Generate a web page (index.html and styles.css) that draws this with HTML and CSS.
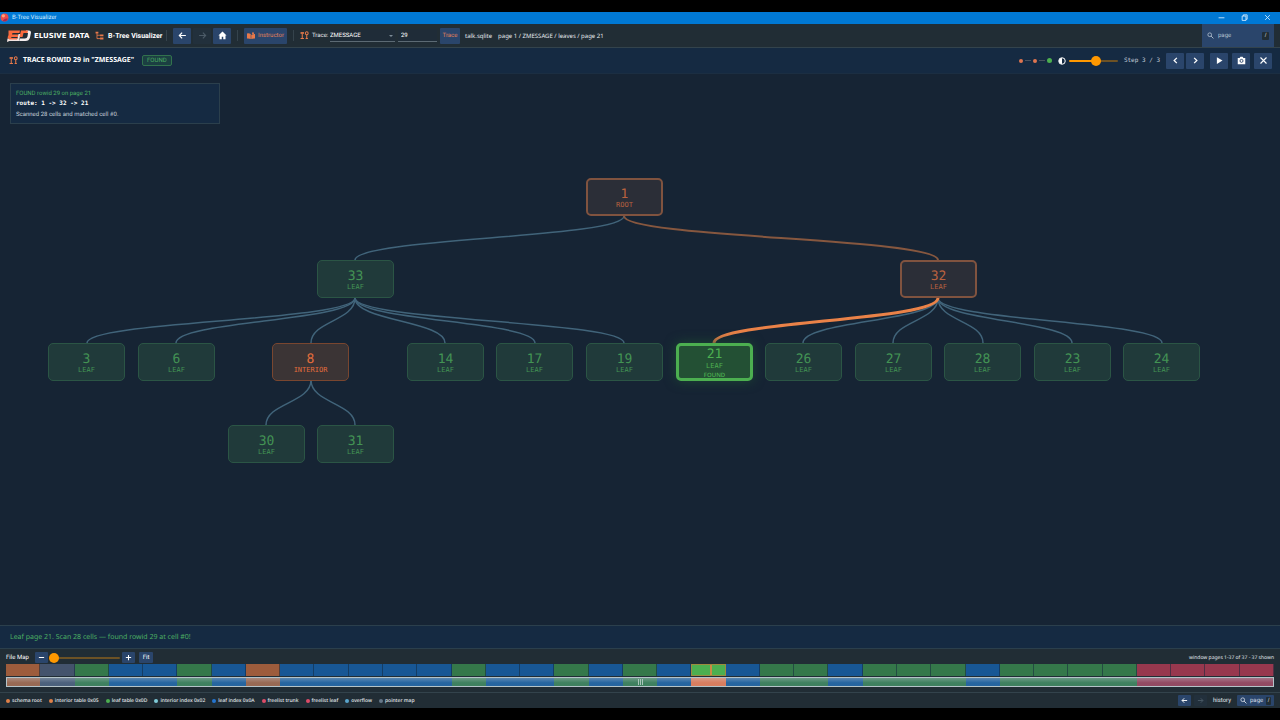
FILE: index.html
```html
<!DOCTYPE html>
<html lang="en">
<head>
<meta charset="utf-8">
<meta name="viewport" content="width=device-width, initial-scale=1">
<title>B-Tree Visualizer</title>
<link rel="stylesheet" href="styles.css">
</head>
<body>
<svg class="defs" aria-hidden="true">
  <symbol id="i-left" viewBox="0 0 12 12"><path d="M10.5 6H2M5.5 2.2 1.8 6l3.7 3.8" fill="none" stroke="currentColor" stroke-width="1.6"/></symbol>
  <symbol id="i-right" viewBox="0 0 12 12"><path d="M1.500 6H10M6.500 2.200 10.200 6 6.500 9.800" fill="none" stroke="currentColor" stroke-width="1.500"/></symbol>
  <symbol id="i-home" viewBox="0 0 12 12"><path d="M6 .8.6 5.900H2V11h3V7.500h2V11h3V5.900h1.400z" fill="currentColor"/></symbol>
  <symbol id="i-prev" viewBox="0 0 12 12"><path d="M7.800 2.500 4.200 6l3.600 3.500" fill="none" stroke="currentColor" stroke-width="1.700"/></symbol>
  <symbol id="i-next" viewBox="0 0 12 12"><path d="M4.200 2.500 7.800 6 4.200 9.500" fill="none" stroke="currentColor" stroke-width="1.700"/></symbol>
  <symbol id="i-close" viewBox="0 0 12 12"><path d="m2 2 8 8M10 2 2 10" fill="none" stroke="currentColor" stroke-width="1.500"/></symbol>
  <symbol id="i-search" viewBox="0 0 12 12"><circle cx="4.700" cy="4.700" r="3.200" fill="none" stroke="currentColor" stroke-width="1.400"/><path d="m7 7 4 4" stroke="currentColor" stroke-width="1.600"/></symbol>
  <symbol id="i-route" viewBox="0 0 16 16"><path d="M4 5v8.500M1 13.500h6M12 7v6.500M10 13.500h4" fill="none" stroke="currentColor" stroke-width="1.800"/><path d="M1 2h6v3H1z" fill="currentColor"/><circle cx="12" cy="4" r="2.500" fill="none" stroke="currentColor" stroke-width="1.800"/></symbol>
  <symbol id="i-tree" viewBox="0 0 16 16"><path d="M1 1.500h5v3H1zM9 6h6v3.500H9zM9 11.500h6V15H9z" fill="currentColor"/><path d="M3.500 4v9.500H9M3.500 7.500H9" fill="none" stroke="currentColor" stroke-width="1.500"/></symbol>
</svg>
<div class="app">
  <div class="titlebar">
    <svg class="app-icon" viewBox="0 0 16 16" aria-hidden="true"><circle cx="8" cy="8" r="7" fill="#e94b4b"/><circle cx="6" cy="5" r="3" fill="#ffa07a"/><path d="M5 14c1-3 5-5 9-4-1 4-6 6-9 4z" fill="#a32855"/></svg>
    <span>B-Tree Visualizer</span>
    <div class="window-controls">
      <button aria-label="Minimize"><svg viewBox="0 0 12 12"><path d="M1 6.500h10" stroke="currentColor" stroke-width="1.500"/></svg></button>
      <button aria-label="Restore"><svg viewBox="0 0 12 12"><path d="M2 3.500h6.500V11H2zM4 3.500v-2h6.500V9H8.500" fill="none" stroke="currentColor" stroke-width="1.500"/></svg></button>
      <button aria-label="Close"><svg viewBox="0 0 12 12"><use href="#i-close"/></svg></button>
    </div>
  </div>

  <header class="toolbar">
    <div class="brand">
      <svg class="logo" viewBox="0 0 48 24" aria-hidden="true">
        <path d="M3 1h23l-1 5H11l-1 3h13l-1 5H9l-1 3H4l-3-2 2-5z" fill="#fa6a3d"/>
        <path d="M1 17h20l2-9h4l-3 14H5l-5 2z" fill="#f3e4e0"/>
        <path d="M2 16h19l-1 3H4z" fill="#f3704a"/>
        <path d="M38 1h6q4 0 4 4l-2 10q-2 7-9 7H24l2-5h10q4 0 5-4l1-7h-5z" fill="#f4eeee"/>
        <path d="M28 1h14l-1 5h-8l-2 8h-6z" fill="#fa6a3d"/>
      </svg>
      <span class="wordmark">ELUSIVE DATA</span>
    </div>
    <div class="product"><svg class="ico orange"><use href="#i-tree"/></svg><strong>B-Tree Visualizer</strong></div>
    <span class="sep"></span>
    <div class="nav">
      <button class="btn" aria-label="Back"><svg class="ico"><use href="#i-left"/></svg></button>
      <button class="btn ghost" aria-label="Forward" disabled><svg class="ico"><use href="#i-right"/></svg></button>
      <button class="btn" aria-label="Home"><svg class="ico"><use href="#i-home"/></svg></button>
    </div>
    <span class="sep"></span>
    <button class="btn instructor"><svg class="ico" viewBox="0 0 16 16"><path d="M0 3q4-1 7.500 1v10Q4 12.500 0 13zM8.500 6Q11 4 16 4v9q-4-.5-7.500 1z" fill="currentColor"/><circle cx="12" cy="2.500" r="2" fill="currentColor"/></svg>Instructor</button>
    <span class="sep"></span>
    <div class="trace-form">
      <svg class="ico orange"><use href="#i-route"/></svg>
      <label for="table">Trace:</label>
      <span class="select"><select id="table"><option>ZMESSAGE</option></select></span>
      <input class="rowid" type="text" value="29" aria-label="Row id">
      <button class="btn trace">Trace</button>
    </div>
    <div class="crumbs"><span>talk.sqlite</span><span>page 1 / ZMESSAGE / leaves / page 21</span></div>
    <button class="search"><svg class="ico"><use href="#i-search"/></svg><span>page</span><kbd>/</kbd></button>
  </header>

  <div class="subbar">
    <svg class="ico orange"><use href="#i-route"/></svg>
    <h1>TRACE ROWID 29 in "ZMESSAGE"</h1>
    <span class="found">FOUND</span>
    <div class="controls">
      <div class="steps"><i class="dot"></i><i class="line"></i><i class="dot"></i><i class="line"></i><i class="dot done"></i></div>
      <svg class="ico contrast" viewBox="0 0 16 16" aria-hidden="true"><circle cx="8" cy="8" r="6.500" fill="none" stroke="#fff" stroke-width="2"/><path d="M8 2a6 6 0 0 0 0 12z" fill="#fff"/></svg>
      <input class="slider dim" type="range" min="0" max="100" value="56" aria-label="Contrast">
      <span class="step">Step 3 / 3</span>
      <div class="pair">
        <button class="btn" aria-label="Previous step"><svg class="ico"><use href="#i-prev"/></svg></button>
        <button class="btn" aria-label="Next step"><svg class="ico"><use href="#i-next"/></svg></button>
      </div>
      <div class="triple">
        <button class="btn" aria-label="Play"><svg class="ico" viewBox="0 0 12 12"><path d="M2.500 1.500 10 6l-7.500 4.500z" fill="currentColor"/></svg></button>
        <button class="btn" aria-label="Snapshot"><svg class="ico" viewBox="0 0 12 12"><path d="M1 2.500h2.500l1-1.500h3l1 1.500H11v8.500H1z" fill="currentColor"/><circle cx="6" cy="6.500" r="2" fill="none" stroke="#2a456b" stroke-width="1.200"/></svg></button>
        <button class="btn" aria-label="Close trace"><svg class="ico"><use href="#i-close"/></svg></button>
      </div>
    </div>
  </div>

  <main class="canvas">
    <aside class="result">
      <p class="ok">FOUND rowid 29 on page 21</p>
      <p class="route">route: 1 -&gt; 32 -&gt; 21</p>
      <p>Scanned 28 cells and matched cell #0.</p>
    </aside>
    <div class="stage">
      <svg class="edges" viewBox="0 0 1152 286" aria-hidden="true">
        <g class="edge">
          <path d="M576 38C576 60 307 60 307 82"/>
          <path d="M307 120C307 143 39 143 39 165"/>
          <path d="M307 120C307 143 128 143 128 165"/>
          <path d="M307 120C307 143 263 143 263 165"/>
          <path d="M307 120C307 143 397 143 397 165"/>
          <path d="M307 120C307 143 487 143 487 165"/>
          <path d="M307 120C307 143 576 143 576 165"/>
          <path d="M263 202C263 225 218 225 218 247"/>
          <path d="M263 202C263 225 307 225 307 247"/>
          <path d="M890 120C890 143 755 143 755 165"/>
          <path d="M890 120C890 143 845 143 845 165"/>
          <path d="M890 120C890 143 935 143 935 165"/>
          <path d="M890 120C890 143 1024 143 1024 165"/>
          <path d="M890 120C890 143 1114 143 1114 165"/>
        </g>
        <path class="visited" d="M576 38C576 60 890 60 890 82"/>
        <path class="active" d="M890 120C890 143 666 143 666 165"/>
      </svg>
      <button class="node path" style="left:538px;top:0"><b>1</b><small>ROOT</small></button>
      <button class="node" style="left:269px;top:82px"><b>33</b><small>LEAF</small></button>
      <button class="node path" style="left:852px;top:82px"><b>32</b><small>LEAF</small></button>
      <button class="node" style="left:0;top:165px"><b>3</b><small>LEAF</small></button>
      <button class="node" style="left:90px;top:165px"><b>6</b><small>LEAF</small></button>
      <button class="node interior" style="left:224px;top:165px"><b>8</b><small>INTERIOR</small></button>
      <button class="node" style="left:359px;top:165px"><b>14</b><small>LEAF</small></button>
      <button class="node" style="left:448px;top:165px"><b>17</b><small>LEAF</small></button>
      <button class="node" style="left:538px;top:165px"><b>19</b><small>LEAF</small></button>
      <button class="node hit" style="left:628px;top:165px"><b>21</b><small>LEAF</small><small class="tag">FOUND</small></button>
      <button class="node" style="left:717px;top:165px"><b>26</b><small>LEAF</small></button>
      <button class="node" style="left:807px;top:165px"><b>27</b><small>LEAF</small></button>
      <button class="node" style="left:896px;top:165px"><b>28</b><small>LEAF</small></button>
      <button class="node" style="left:986px;top:165px"><b>23</b><small>LEAF</small></button>
      <button class="node" style="left:1075px;top:165px"><b>24</b><small>LEAF</small></button>
      <button class="node" style="left:180px;top:247px"><b>30</b><small>LEAF</small></button>
      <button class="node" style="left:269px;top:247px"><b>31</b><small>LEAF</small></button>
    </div>
  </main>

  <div class="message">Leaf page 21. Scan 28 cells — found rowid 29 at cell #0!</div>

  <section class="filemap">
    <div class="map-head">
      <label for="zoom">File Map</label>
      <button class="mini" aria-label="Zoom out"><svg viewBox="0 0 12 12"><path d="M1.500 6h9" stroke="currentColor" stroke-width="1.800"/></svg></button>
      <input class="slider zoom" id="zoom" type="range" min="0" max="100" value="0">
      <button class="mini" aria-label="Zoom in"><svg viewBox="0 0 12 12"><path d="M1.500 6h9M6 1.500v9" stroke="currentColor" stroke-width="1.800"/></svg></button>
      <button class="mini fit">Fit</button>
      <span class="shown">window pages 1-37 of 37 - 37 shown</span>
    </div>
    <div class="cells">
      <i class="o"></i><i class="x"></i><i class="g"></i><i class="b"></i><i class="b"></i><i class="g"></i><i class="b"></i><i class="o"></i><i class="b"></i><i class="b"></i><i class="b"></i><i class="b"></i><i class="b"></i><i class="g"></i><i class="b"></i><i class="b"></i><i class="g"></i><i class="b"></i><i class="g"></i><i class="b"></i><i class="cur"></i><i class="b"></i><i class="g"></i><i class="g"></i><i class="b"></i><i class="g"></i><i class="g"></i><i class="g"></i><i class="b"></i><i class="g"></i><i class="g"></i><i class="g"></i><i class="g"></i><i class="r"></i><i class="r"></i><i class="r"></i><i class="r"></i>
    </div>
    <div class="overview">
      <i class="o"></i><i class="x"></i><i class="g"></i><i class="b"></i><i class="b"></i><i class="g"></i><i class="b"></i><i class="o"></i><i class="b"></i><i class="b"></i><i class="b"></i><i class="b"></i><i class="b"></i><i class="g"></i><i class="b"></i><i class="b"></i><i class="g"></i><i class="b"></i><i class="g"></i><i class="b"></i><i class="cur"></i><i class="b"></i><i class="g"></i><i class="g"></i><i class="b"></i><i class="g"></i><i class="g"></i><i class="g"></i><i class="b"></i><i class="g"></i><i class="g"></i><i class="g"></i><i class="g"></i><i class="r"></i><i class="r"></i><i class="r"></i><i class="r"></i>
      <span class="brush"></span>
    </div>
  </section>

  <footer class="legend">
    <ul>
      <li class="c1">schema root</li><li class="c1">interior table 0x05</li><li class="c2">leaf table 0x0D</li><li class="c3">interior index 0x02</li><li class="c4">leaf index 0x0A</li><li class="c5">freelist trunk</li><li class="c5">freelist leaf</li><li class="c6">overflow</li><li class="c7">pointer map</li>
    </ul>
    <div class="history">
      <button class="mini" aria-label="History back"><svg viewBox="0 0 12 12"><use href="#i-left"/></svg></button>
      <button class="mini ghost" aria-label="History forward" disabled><svg viewBox="0 0 12 12"><use href="#i-right"/></svg></button>
      <span>history</span>
      <button class="mini goto"><svg viewBox="0 0 12 12"><use href="#i-search"/></svg>page<kbd>/</kbd></button>
    </div>
  </footer>
</div>
</body>
</html>
```
FILE: styles.css
```css
* { box-sizing: border-box; }
body {
  margin: 0;
  padding: 12px 0;
  min-height: 100vh;
  display: flex;
  background: #000;
  color: #e6ebef;
  font: 6px/10px Roboto, "Noto Sans", sans-serif;
  text-rendering: geometricPrecision;
}
button, input, select { font: inherit; color: inherit; border: 0; margin: 0; padding: 0; background: none; text-rendering: inherit; }
button { display: flex; align-items: center; justify-content: center; cursor: pointer; }
svg { display: block; flex: none; }
.defs { position: absolute; width: 0; height: 0; }
.app { flex: 1; min-width: 0; display: flex; flex-direction: column; background: #162434; }
.ico { width: 9px; height: 9px; }
.orange { color: #e8794a; }

.titlebar { display: flex; align-items: center; gap: 3px; height: 12px; padding-bottom: 1px; background: #0078d4; color: #d3ebff; }
.app-icon { width: 9px; height: 9px; }
.window-controls { margin-left: auto; display: flex; gap: 15px; padding-right: 9px; }
.window-controls button { width: 8px; height: 8px; }
.window-controls svg { width: 7px; height: 7px; }

.toolbar { display: flex; align-items: center; height: 24px; padding: 0 6px 0 7px; background: #212d35; border-bottom: 1px solid #33434c; }
.brand { display: flex; align-items: center; gap: 3px; }
.logo { width: 24px; height: 12px; }
.wordmark { width: 56px; font: bold 7px/10px "DejaVu Sans", sans-serif; color: #fff; white-space: nowrap; }
.product { display: flex; align-items: center; gap: 4px; width: 65px; margin-left: 5px; color: #fff; font-size: 7px; white-space: nowrap; }
.product strong { font-weight: 700; }
.sep { flex: none; width: 1px; height: 11px; margin: 0 6px; background: #35434c; }
.nav { display: flex; gap: 2px; }
.btn { height: 16px; width: 18px; background: #2a456b; color: #fff; border-radius: 1px; }
.instructor, .trace { color: #e0805a; }
.instructor { width: 43px; gap: 3px; }
.instructor .ico { width: 8px; height: 8px; color: #e8794a; }
.trace-form { display: flex; align-items: center; gap: 3px; }
.trace-form label { width: 15px; white-space: nowrap; }
.trace { width: 20px; }
.select { position: relative; display: flex; }
.select::after { content: ""; position: absolute; right: 2px; top: 6px; border: 2px solid transparent; border-top-color: #7d8b96; }
select { appearance: none; width: 65px; }
select, .rowid { height: 13px; padding-top: 1px; color: #fff; background: #1f2c38; border-bottom: 1px solid #5c6a74; }
.rowid { width: 39px; padding-left: 3px; }
.crumbs { display: flex; gap: 6px; margin-left: 5px; font: 6px/10px "Noto Sans", sans-serif; white-space: nowrap; }
.search { align-self: stretch; justify-content: flex-start; gap: 4px; width: 72px; margin-left: auto; padding: 0 5px; background: #2a456b; color: #b3c0cf; }
.search .ico { width: 7px; height: 7px; }
kbd { margin-left: auto; width: 7px; border-radius: 1px; background: #212d35; color: #cdd5dc; font: 6px/8px "Liberation Sans", sans-serif; text-align: center; }

.subbar { display: flex; align-items: center; height: 26px; padding: 0 8px 0 9px; background: #152a42; border-bottom: 1px solid #1b2e42; }
.subbar h1 { margin: 1px 8px 0 5px; font: 700 7px/12px "Noto Sans", sans-serif; color: #fff; white-space: nowrap; }
.found { padding: 0 4px; border: 1px solid #32724d; border-radius: 2px; background: #1b3f42; color: #4caf62; line-height: 9px; }
.controls { display: flex; align-items: center; margin-left: auto; }
.steps { display: flex; align-items: center; gap: 2px; margin-right: 6px; }
.dot { width: 4px; height: 4px; border-radius: 50%; background: #df7550; }
.dot.done { width: 5px; height: 5px; background: #4caf50; }
.line { width: 6px; height: 1px; background: #49525f; }
.contrast { width: 8px; height: 8px; margin-right: 3px; }
.slider { appearance: none; height: 12px; }
.slider::-webkit-slider-runnable-track { height: 2px; border-radius: 1px; background: #6d5225; }
.slider::-webkit-slider-thumb { appearance: none; width: 10px; height: 10px; margin-top: -4px; border-radius: 50%; background: #ff9800; }
.dim { width: 49px; }
.dim::-webkit-slider-runnable-track { background: linear-gradient(90deg, #ff9800 55%, #6d5225 55%); }
.step { margin: 0 6px; font: 6px/10px "DejaVu Sans Mono", monospace; color: #c4ced8; white-space: nowrap; }
.pair { display: flex; gap: 2px; margin-right: 6px; }
.triple { display: flex; gap: 4px; }

.canvas { flex: 1; position: relative; padding: 9px 10px; overflow: hidden; }
.result { width: 210px; padding: 5px 5px 3px; border: 1px solid #2b3f4c; background: #152a42; }
.result p { margin: 0; line-height: 11px; color: #c4ced8; }
.result .ok { line-height: 10px; color: #4caf62; }
.result .route { line-height: 10px; color: #fff; font-family: "DejaVu Sans Mono", monospace; font-weight: 700; }
.stage { position: relative; width: 1152px; height: 286px; margin: 54px auto 0; left: -16px; }
.edges { position: absolute; inset: 0; width: 1152px; height: 286px; overflow: visible; fill: none; }
.edge { stroke: #41647a; stroke-width: 1.500; }
.visited { stroke: #86573f; stroke-width: 2; }
.active { stroke: #ea8248; stroke-width: 3; }
.node {
  position: absolute;
  flex-direction: column;
  width: 77px;
  height: 38px;
  padding-top: 4px;
  border: 1px solid #2b5545;
  border-radius: 5px;
  background: #203a3a;
  color: #439354;
  font-family: "DejaVu Sans Mono", monospace;
}
.node b { font-size: 13px; line-height: 13px; font-weight: 400; }
.node small { font-size: 7px; line-height: 9px; }
.node.path { border: 2px solid #80533f; background: #2b2e37; color: #b8613f; }
.node.interior { border-color: #79462f; background: #3b3435; color: #e06c3c; }
.node.hit { padding-top: 3px; border: 3px solid #4caf50; background: #235034; color: #4caf50; box-shadow: 0 0 12px #1d4734; }
.node.hit small { line-height: 10px; }
.node.hit .tag { font: 600 6px/8px "Open Sans", sans-serif; }

.message { height: 24px; padding: 1px 10px 0; border-top: 1px solid #2b3f4c; border-bottom: 1px solid #2b3f4c; background: #152a42; color: #4caf62; font: 7px/22px "Noto Sans", sans-serif; }
.filemap { height: 43px; padding: 2px 6px 0; background: #212d35; }
.map-head { display: flex; align-items: center; height: 13px; }
.map-head label { width: 24px; margin-right: 5px; white-space: nowrap; color: #fff; }
.mini { width: 13px; height: 11px; border-radius: 1px; background: #2a456b; color: #fff; }
.mini svg { width: 7px; height: 7px; }
.ghost { background: #22303c; color: #4c5b68; }
.zoom { width: 71px; margin: 0 2px 0 1px; }
.fit { margin-left: 4px; width: 14px; }
.shown { margin-left: auto; font: 5px/10px "Noto Sans", sans-serif; white-space: nowrap; }
.cells, .overview { display: grid; grid-template-columns: repeat(37, 1fr); }
.cells { height: 12px; }
.cells i { border-right: 1px solid rgba(20, 40, 60, .55); }
.o { background: #9d5c3c; }
.x { background: #44536c; }
.g { background: #35784a; }
.b { background: #185795; }
.r { background: #97384e; }
.cells .cur { border: 1px solid #9b8c3f; background: linear-gradient(90deg, transparent 55%, #c98a45 55% 60%, transparent 60%), #4caf50; }
.overview { position: relative; height: 10px; margin-top: 1px; }
.overview .cur { background: #e8744a; }
.brush { position: absolute; inset: 0; border: 1px solid #b4c3c8; background: linear-gradient(rgba(190, 210, 225, .4), rgba(120, 180, 220, .15) 60%, rgba(120, 180, 220, .15)); }
.brush::after { content: ""; position: absolute; left: 50%; top: 1px; width: 5px; height: 6px; margin-left: -2px; background: repeating-linear-gradient(90deg, #a9c5bb 0 1px, transparent 1px 2px); }

.legend { display: flex; align-items: center; height: 16px; padding: 0 6px; background: #212d35; border-top: 1px solid #33434c; white-space: nowrap; }
.legend ul { display: flex; gap: 7px; margin: 0; padding: 0; list-style: none; font: 500 5px/10px "Noto Sans", sans-serif; }
.legend li { display: flex; align-items: center; gap: 2px; }
.legend li::before { content: ""; width: 4px; height: 4px; border-radius: 50%; background: currentColor; }
.c1::before { color: #e08048; }
.c2::before { color: #4caf50; }
.c3::before { color: #80cbd8; }
.c4::before { color: #2474d0; }
.c5::before { color: #dd4b67; }
.c6::before { color: #5aa5cc; }
.c7::before { color: #66788a; }
.history { display: flex; align-items: center; margin-left: auto; gap: 3px; }
.history span { margin: 0 3px; }
.goto { width: 37px; padding: 0 3px; gap: 3px; color: #d5dde6; }
```
